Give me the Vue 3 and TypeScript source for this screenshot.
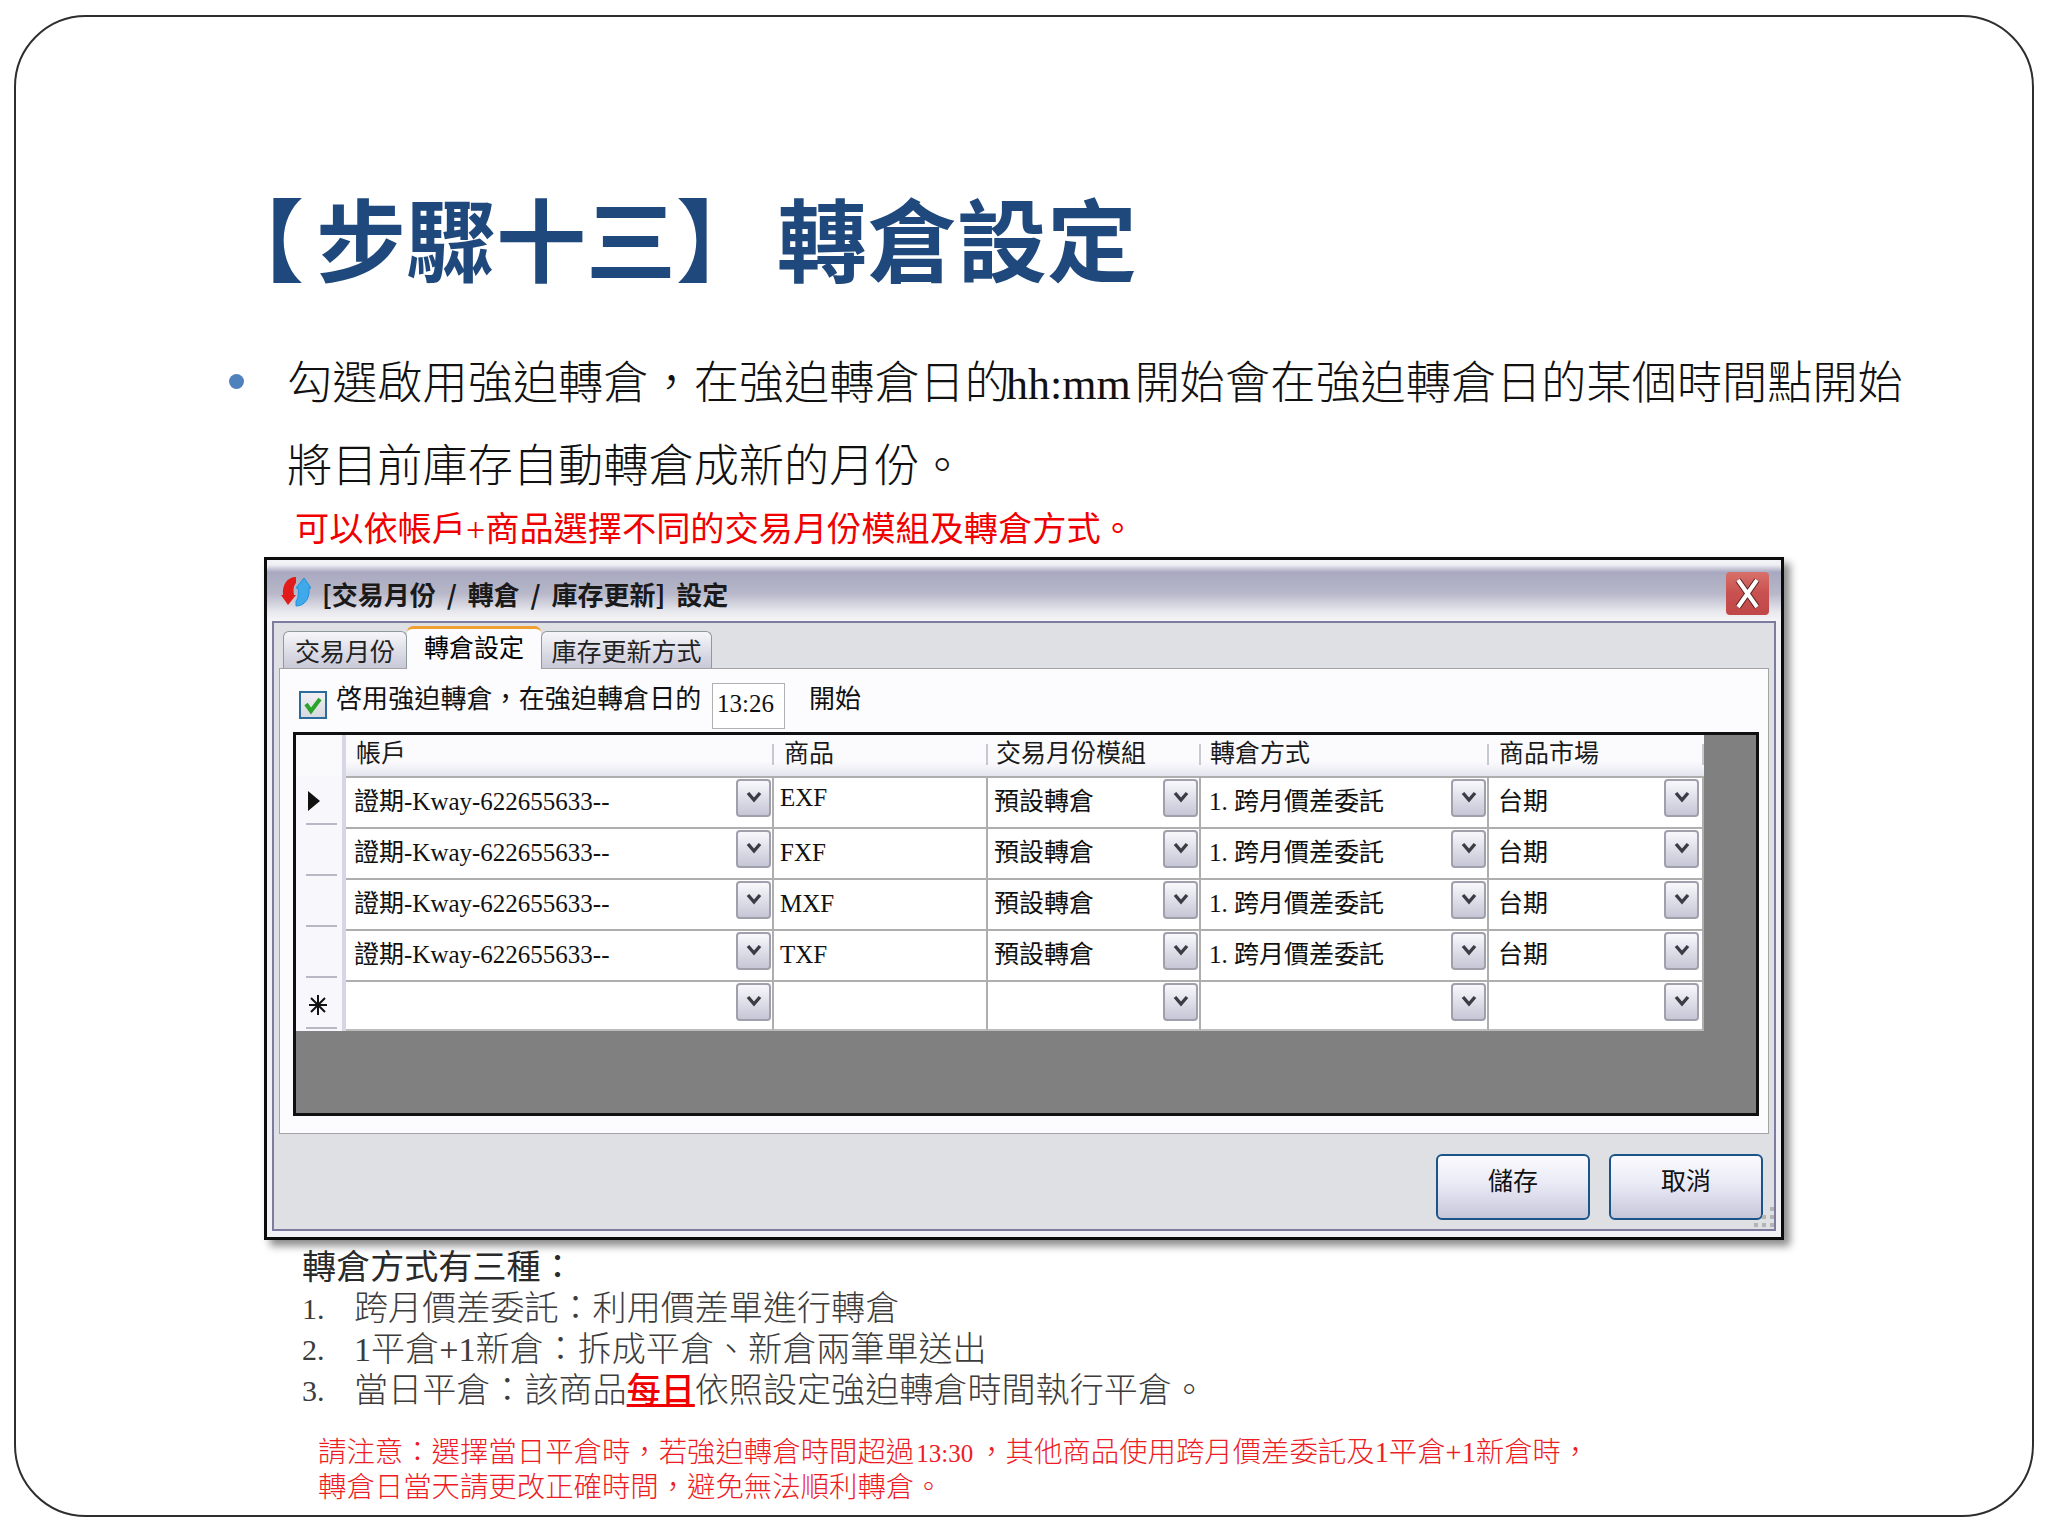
<script setup lang="ts">
interface Row {
  account: string
  product: string
  tpl: string
  method: string
  market: string
  cls: string
}
const rows: Row[] = [
  { account: '證期-Kway-622655633--', product: 'EXF', tpl: '預設轉倉', method: '1. 跨月價差委託', market: '台期', cls: 'raised' },
  { account: '證期-Kway-622655633--', product: 'FXF', tpl: '預設轉倉', method: '1. 跨月價差委託', market: '台期', cls: '' },
  { account: '證期-Kway-622655633--', product: 'MXF', tpl: '預設轉倉', method: '1. 跨月價差委託', market: '台期', cls: '' },
  { account: '證期-Kway-622655633--', product: 'TXF', tpl: '預設轉倉', method: '1. 跨月價差委託', market: '台期', cls: '' },
  { account: '', product: '', tpl: '', method: '', market: '', cls: '' },
]
const headers = ['帳戶', '商品', '交易月份模組', '轉倉方式', '商品市場']
const columnClasses = ['c-account', 'c-product', 'c-tpl', 'c-method', 'c-market']
</script>

<template>
  <div class="slide">
    <h1 class="title"><span class="br-l">【</span>步驟十三<span class="br-r">】</span>轉倉設定</h1>

    <div class="lead">
      <span class="bullet"></span>
      <p class="lead-text">
        <span class="lead-line">勾選啟用強迫轉倉，在強迫轉倉日的<span class="lead-latin">hh:mm</span>開始會在強迫轉倉日的某個時間點開始</span>
        <span class="lead-line">將目前庫存自動轉倉成新的月份。</span>
      </p>
    </div>

    <p class="red-line">可以依帳戶+商品選擇不同的交易月份模組及轉倉方式。</p>

    <section class="dialog">
      <header class="titlebar">
        <svg class="logo" viewBox="0 0 30 30" width="30" height="30">
          <path d="M15 0C6 0 1 8 2 18L0 18L7 28L15 18L13 18C12 12 13 8 15 6Z" fill="#e31a1a" />
          <path d="M15 29C24 29 29 21 28 11L30 11L23 1L15 11L17 11C18 17 17 22 15 24Z" fill="#3fa9ea" stroke="#1c90dc" stroke-width="1" />
        </svg>
        <span class="dialog-title">[交易月份 / 轉倉 / 庫存更新] 設定</span>
        <button class="close" type="button" aria-label="關閉">
          <svg viewBox="0 0 43 43" width="43" height="43">
            <path d="M12 8L31 35M31 8L12 35" stroke="#5a2020" stroke-width="6" fill="none" />
            <path d="M12 8L31 35M31 8L12 35" stroke="#ffffff" stroke-width="4" fill="none" />
          </svg>
        </button>
      </header>

      <div class="body">
        <nav class="tabs">
          <span class="tab">交易月份</span>
          <span class="tab active">轉倉設定</span>
          <span class="tab wide">庫存更新方式</span>
        </nav>

        <div class="panel">
          <div class="option">
            <span class="check">
              <svg viewBox="0 0 24 24" width="24" height="24">
                <path d="M5 11L10 18L19 6" stroke="#2aa52a" stroke-width="4" fill="none" />
              </svg>
            </span>
            <span class="option-text">啓用強迫轉倉，在強迫轉倉日的</span>
            <span class="time">13:26</span>
            <span class="option-end">開始</span>
          </div>

          <div class="grid-view">
            <div class="table">
              <div class="row head">
                <div class="rowhead"></div>
                <div v-for="(h, i) in headers" :key="h" class="hcell" :class="columnClasses[i]">{{ h }}</div>
              </div>
              <div v-for="(r, idx) in rows" :key="idx" class="row">
                <div class="rowhead">
                  <svg v-if="idx === 0" class="marker" viewBox="0 0 12 20" width="12" height="20">
                    <path d="M0 0L12 10L0 20Z" fill="#111" />
                  </svg>
                  <svg v-if="idx === 4" class="star" viewBox="0 0 20 20" width="20" height="20">
                    <path d="M10 0V20M1 10H19M3 3L17 17M17 3L3 17" stroke="#111" stroke-width="2" fill="none" />
                  </svg>
                </div>
                <div class="cell c-account">
                  <span class="val">{{ r.account }}</span>
                  <span class="drop"><svg viewBox="0 0 16 12" width="16" height="12"><path d="M2 2L8 9L14 2" stroke="#3c3c44" stroke-width="3.4" fill="none" /></svg></span>
                </div>
                <div class="cell c-product">
                  <span class="val" :class="r.cls">{{ r.product }}</span>
                </div>
                <div class="cell c-tpl">
                  <span class="val">{{ r.tpl }}</span>
                  <span class="drop"><svg viewBox="0 0 16 12" width="16" height="12"><path d="M2 2L8 9L14 2" stroke="#3c3c44" stroke-width="3.4" fill="none" /></svg></span>
                </div>
                <div class="cell c-method">
                  <span class="val">{{ r.method }}</span>
                  <span class="drop"><svg viewBox="0 0 16 12" width="16" height="12"><path d="M2 2L8 9L14 2" stroke="#3c3c44" stroke-width="3.4" fill="none" /></svg></span>
                </div>
                <div class="cell c-market">
                  <span class="val">{{ r.market }}</span>
                  <span class="drop"><svg viewBox="0 0 16 12" width="16" height="12"><path d="M2 2L8 9L14 2" stroke="#3c3c44" stroke-width="3.4" fill="none" /></svg></span>
                </div>
              </div>
            </div>
          </div>
        </div>

        <footer class="actions">
          <button class="btn" type="button">儲存</button>
          <button class="btn" type="button">取消</button>
          <svg class="grip" viewBox="0 0 24 24" width="24" height="24">
            <g fill="#b4b4b4">
              <rect x="18" y="2" width="4" height="4" />
              <rect x="18" y="10" width="4" height="4" />
              <rect x="10" y="10" width="4" height="4" />
              <rect x="18" y="18" width="4" height="4" />
              <rect x="10" y="18" width="4" height="4" />
              <rect x="2" y="18" width="4" height="4" />
            </g>
          </svg>
        </footer>
      </div>
    </section>

    <div class="notes">
      <p class="notes-head">轉倉方式有三種：</p>
      <ol class="notes-list">
        <li><span class="num">1.</span><span>跨月價差委託：利用價差單進行轉倉</span></li>
        <li><span class="num">2.</span><span>1平倉+1新倉：拆成平倉、新倉兩筆單送出</span></li>
        <li><span class="num">3.</span><span>當日平倉：該商品<em class="daily">每日</em>依照設定強迫轉倉時間執行平倉。</span></li>
      </ol>
    </div>

    <p class="warning">請注意：選擇當日平倉時，若強迫轉倉時間超過<span class="latin">13:30</span>，其他商品使用跨月價差委託及1平倉+1新倉時，<br />轉倉日當天請更改正確時間，避免無法順利轉倉。</p>
  </div>
</template>

<style>
html, body { margin: 0; background: #ffffff; }
</style>

<style scoped>
* { box-sizing: border-box; }
p, h1, ol { margin: 0; padding: 0; }

.slide {
  width: 2020px;
  height: 1502px;
  margin: 15px 0 0 14px;
  border: 2px solid #2e2e2e;
  border-radius: 72px;
  background: #fff;
  font-family: "Liberation Serif", "Noto Sans CJK TC", serif;
  color: #111;
}

.title {
  margin: 174px 0 0 198px;
  font-family: "Noto Sans CJK TC", sans-serif;
  font-size: 90px;
  line-height: 90px;
  font-weight: 700;
  color: #1f497d;
  white-space: nowrap;
}
.br-l { letter-spacing: 12px; }
.br-r { letter-spacing: 11px; }

.lead { display: flex; margin: 62px 0 0 213px; }
.bullet { width: 15px; height: 15px; margin: 31px 43px 0 0; border-radius: 50%; background: #4f81bd; flex: none; }
.lead-text { font-size: 45.2px; line-height: 82px; font-weight: 300; white-space: nowrap; }
.lead-line { display: block; }
.lead-latin { font-size: 44px; margin: 0 4px 0 -4px; }

.red-line {
  margin: 2px 0 0 279px;
  font-size: 34.2px;
  line-height: 40px;
  color: #f00000;
  white-space: nowrap;
}

.dialog {
  width: 1520px;
  height: 683px;
  margin: 7px 0 0 248px;
  border: 3px solid #0c0c0c;
  background: #f2f2f6;
  box-shadow: 6px 6px 8px #8c8c8c;
  font-family: "Liberation Serif", "Noto Sans CJK TC", serif;
  color: #111;
}

.titlebar {
  display: flex;
  align-items: center;
  height: 61px;
  padding: 0 12px 0 14px;
  background: linear-gradient(#f4f4f8 0%, #eeeef4 8%, #a8a8c0 20%, #b8b8ca 55%, #e8e8ee 85%, #f6f6f8 100%);
  border-radius: 10px 10px 0 0;
}
.logo { flex: none; margin-top: 2px; }
.dialog-title {
  margin: 5px 0 0 11px;
  font-family: "Noto Sans CJK TC", sans-serif;
  font-size: 26px;
  font-weight: 700;
  word-spacing: 5px;
  white-space: nowrap;
  color: #1a1a1a;
}
.close {
  display: block;
  width: 43px;
  height: 43px;
  margin: 5px 0 0 auto;
  padding: 0;
  border: none;
  border-radius: 4px;
  background: linear-gradient(#d87068, #c85050 50%, #c04848);
}
.close svg { display: block; }

.body {
  height: 610px;
  margin: 0 5px;
  border: 2px solid #7c7ca0;
  background: #dfe0e3;
  padding: 0 5px;
}

.tabs { display: flex; align-items: flex-end; height: 45px; padding-left: 4px; }
.tab {
  display: block;
  width: 124px;
  height: 37px;
  border: 1px solid #8d9a9c;
  border-bottom: none;
  border-radius: 6px 6px 0 0;
  background: linear-gradient(#f6f6fa, #c8c8d8);
  font-family: "Noto Sans CJK TC", sans-serif;
  font-size: 25px;
  line-height: 37px;
  text-align: center;
  white-space: nowrap;
  color: #222;
}
.tab.wide { width: 171px; }
.tab.active {
  position: relative;
  z-index: 1;
  width: 134px;
  height: 43px;
  margin-bottom: -1px;
  border: none;
  border-top: 3px solid #f0a030;
  background: #fcfcfe;
  line-height: 34px;
  color: #000;
}

.panel {
  height: 466px;
  border: 1px solid #a4a4a4;
  background: #fcfcfe;
  padding: 0 9px 0 13px;
  font-family: "Noto Sans CJK TC", sans-serif;
}

.option { display: flex; align-items: flex-start; height: 63px; font-size: 26px; }
.check {
  display: flex;
  align-items: center;
  justify-content: center;
  width: 28px;
  height: 28px;
  margin: 22px 0 0 6px;
  border: 2px solid #2a6c9c;
  background: linear-gradient(#f0f0f4, #d8d8e0);
  flex: none;
}
.option-text { margin: 9px 0 0 9px; line-height: 38px; white-space: nowrap; width: 376px; letter-spacing: 0.1px; }
.time {
  display: block;
  width: 73px;
  height: 46px;
  margin-top: 14px;
  padding-left: 4px;
  border: 1px solid #b0b0b0;
  background: #fff;
  font-family: "Liberation Serif", serif;
  font-size: 25px;
  line-height: 40px;
}
.option-end { margin: 9px 0 0 24px; line-height: 38px; white-space: nowrap; }

.grid-view {
  height: 384px;
  border: 3px solid #101010;
  background: #808080;
}
.table { display: flex; flex-direction: column; width: 1408px; }
.row {
  display: grid;
  grid-template-columns: 50px 428px 214px 213px 288px 215px;
  height: 51px;
}
.row.head { height: 41px; background: linear-gradient(#fbfbfe 65%, #e4e4ee 100%); }

.rowhead {
  position: relative;
  background: #f8f8fc;
  border-right: 4px solid #d6d6e4;
}
.row.head .rowhead { background: #fafafc; }
.row:not(.head) .rowhead::after {
  content: "";
  position: absolute;
  left: 10px;
  bottom: 2px;
  width: 31px;
  height: 2px;
  background: #b8b8c4;
}
.marker { position: absolute; left: 12px; top: 15px; }
.star { position: absolute; left: 12px; top: 15px; }

.hcell {
  position: relative;
  font-size: 25px;
  line-height: 32px;
  white-space: nowrap;
  color: #1a1a1a;
}
.hcell::after {
  content: "";
  position: absolute;
  right: 0;
  top: 9px;
  width: 2px;
  height: 21px;
  background: #c8c8d0;
}
.hcell.c-account { padding-left: 10px; }
.hcell.c-product { padding-left: 10px; }
.hcell.c-tpl { padding-left: 8px; }
.hcell.c-method { padding-left: 9px; }
.hcell.c-market { padding-left: 10px; }

.cell {
  display: flex;
  align-items: flex-start;
  background: #fff;
  border-right: 2px solid #aeaeae;
  border-top: 2px solid #aeaeae;
  font-family: "Liberation Serif", "Noto Sans CJK TC", serif;
  font-size: 25px;
  line-height: 47px;
  white-space: nowrap;
}
.row:last-child .cell { border-bottom: 2px solid #bcbcbc; }
.cell.c-account { padding: 0 1px 0 8px; }
.cell.c-product { padding: 0 1px 0 6px; }
.cell.c-tpl { padding: 0 1px 0 6px; }
.cell.c-method { padding: 0 1px 0 8px; }
.cell.c-market { padding: 0 3px 0 9px; }
.val { display: block; }
.raised { margin-top: -4px; }

.drop {
  display: flex;
  align-items: center;
  justify-content: center;
  width: 35px;
  height: 38px;
  margin: 1px 0 0 auto;
  border: 2px solid #a0a0ac;
  border-radius: 4px;
  background: linear-gradient(#f8f8fc, #c6c6d6);
  flex: none;
}
.drop svg { display: block; margin-top: -2px; }

.actions {
  position: relative;
  display: flex;
  justify-content: flex-end;
  gap: 19px;
  padding: 20px 6px 0 0;
}
.btn {
  width: 154px;
  height: 66px;
  padding: 0 0 17px;
  border: 2px solid #1a5488;
  border-radius: 6px;
  background: linear-gradient(#fafafe, #eaeaf6 45%, #c6c6da);
  font-family: "Noto Sans CJK TC", sans-serif;
  font-size: 25px;
  color: #111;
}
.grip { position: absolute; right: -7px; top: 71px; }

.notes {
  margin: 7px 0 0 286px;
  font-size: 34.1px;
  line-height: 41px;
  font-weight: 300;
  color: #3c3c3c;
  white-space: nowrap;
}
.notes-head { font-weight: 400; color: #2a2a2a; }
.notes-list { list-style: none; }
.notes-list li { display: flex; }
.num { display: block; width: 52px; font-size: 30px; }
.daily { font-style: normal; font-weight: 500; color: #f00000; text-decoration: underline; text-underline-offset: 2px; }

.warning {
  margin: 25px 0 0 302px;
  font-size: 28.4px;
  line-height: 33.5px;
  font-weight: 300;
  color: #ee1c25;
  white-space: nowrap;
}
.latin { font-size: 25px; margin: 0 4px 0 2px; }
</style>
